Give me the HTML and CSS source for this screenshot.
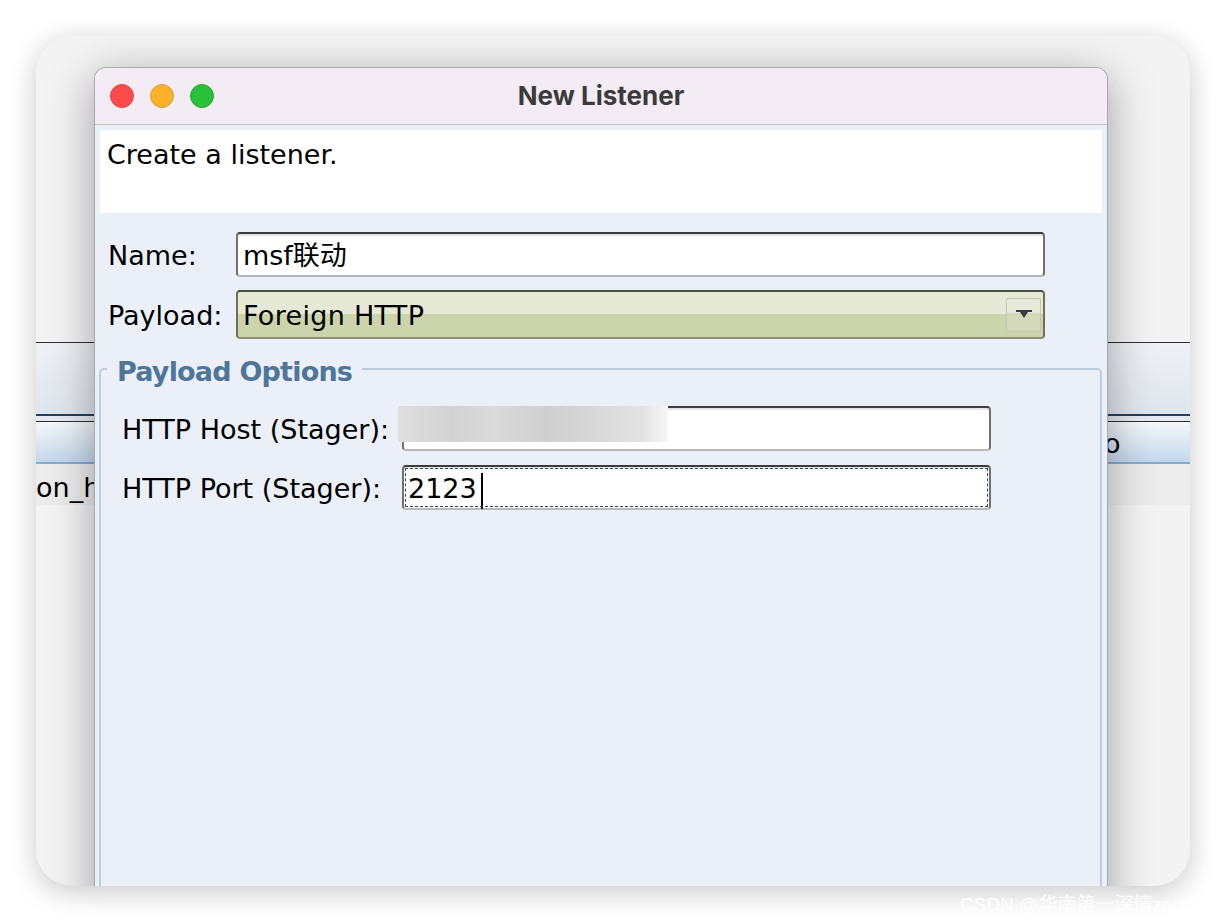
FILE: index.html
```html
<!DOCTYPE html>
<html lang="zh-CN">
    <head>
        <meta charset="utf-8">
        <meta name="viewport" content="width=device-width,initial-scale=1" />
        <title>New Listener</title>
        <link rel="stylesheet" href="styles.css">
    </head>
    <body>
        <div class="card">
            <div class="app">
                <div class="app-top"></div>
                <div class="toolbar"></div>
                <div class="toolbar-gap"></div>
                <div class="table-head"><span class="head-cell">o</span></div>
                <div class="table-row"><span class="row-cell">on_h</span></div>
            </div>

            <div class="dialog">
                <div class="titlebar">
                    <div class="lights">
                        <span class="light red"></span>
                        <span class="light yellow"></span>
                        <span class="light green"></span>
                    </div>
                    <div class="title">New Listener</div>
                </div>
                <div class="dialog-body">
                    <div class="desc">Create a listener.</div>
                    <div class="form">
                        <label class="label">Name:</label>
                        <div class="field">msf联动</div>
                        <label class="label">Payload:</label>
                        <div class="combo">
                            <span class="combo-text">Foreign HTTP</span>
                            <span class="combo-btn">
                                <svg width="16" height="9" viewBox="0 0 16 9">
                                    <path d="M0 0H16V2H12L8 8L4 2H0Z" fill="#3a3a3a"/>
                                </svg>
                            </span>
                        </div>
                    </div>
                    <fieldset class="options">
                        <legend class="legend">Payload Options</legend>
                        <div class="opt-grid">
                            <label class="label">HTTP Host (Stager):</label>
                            <div class="field host"><div class="blur"></div></div>
                            <label class="label">HTTP Port (Stager):</label>
                            <div class="field focus">2123<span class="caret"></span></div>
                        </div>
                    </fieldset>
                </div>
            </div>
        </div>
        <div class="watermark">CSDN @华南第一深情zangcc</div>
    </body>
</html>
```

FILE: styles.css
```css
html, body{
    margin: 0;
    height: 100%;
}
body{
    background: #fff;
    overflow: hidden;
    position: relative;
    font-family: "DejaVu Sans", "Noto Sans CJK SC", sans-serif;
    font-size: 27px;
    color: #000;
}

/* outer screenshot frame */
.card{
    margin: 36px 0 0 36px;
    width: 1154px;
    height: 850px;
    border-radius: 36px;
    background: #f3f3f3;
    box-shadow: 0 6px 28px rgba(0, 0, 0, 0.22);
    position: relative;
    overflow: hidden;
}

/* app window behind the dialog */
.app-top{
    height: 306px;
    border-bottom: 1px solid #2e2e2e;
}
.toolbar{
    height: 71px;
    background: linear-gradient(#eef0f4, #e0e5ed);
    border-bottom: 2px solid #22405f;
}
.toolbar-gap{
    height: 5px;
    background: #e7ebf1;
}
.table-head{
    height: 40px;
    border-top: 1px solid #2e2e2e;
    border-bottom: 2px solid #86abd0;
    background: linear-gradient(#f5f7fa, #c4d7eb);
    display: flex;
    justify-content: flex-end;
    line-height: 40px;
}
.head-cell{
    width: 86px;
    padding-top: 2px;
}
.table-row{
    height: 41px;
    background: #ececec;
    line-height: 41px;
}
.row-cell{
    display: block;
    padding-top: 3px;
}

/* dialog window */
.dialog{
    position: absolute;
    left: 58px;
    top: 31px;
    width: 1014px;
    height: 900px;
    box-sizing: border-box;
    border: 1px solid #a9a9a9;
    border-bottom: none;
    border-radius: 12px 12px 0 0;
    background: #ebf0f8;
    box-shadow: 0 10px 45px rgba(0, 0, 0, 0.35);
    overflow: hidden;
}
.titlebar{
    height: 56px;
    background: #f3ecf5;
    border-bottom: 1px solid #c3c3c3;
    position: relative;
}
.lights{
    position: absolute;
    left: 15px;
    top: 16px;
    display: flex;
    gap: 16px;
}
.light{
    width: 22px;
    height: 22px;
    border-radius: 50%;
    border: 1px solid;
}
.red{
    background: #fd4b4b;
    border-color: #e0443e;
}
.yellow{
    background: #fdb12b;
    border-color: #de9f2a;
}
.green{
    background: #2ac13a;
    border-color: #22a82f;
}
.title{
    text-align: center;
    font-family: Inter, "Liberation Sans", sans-serif;
    font-weight: 700;
    font-size: 26px;
    line-height: 56px;
    color: #3b3b3b;
}

.dialog-body{
    padding: 5px 5px 0 5px;
}
.desc{
    background: #fff;
    height: 76px;
    padding: 7px 7px 0 7px;
    line-height: 36px;
}

.form{
    display: grid;
    grid-template-columns: 136px 809px;
    row-gap: 13px;
    margin-top: 19px;
    align-items: center;
}
.label{
    padding-left: 8px;
    padding-top: 2px;
    white-space: nowrap;
}

.field{
    height: 45px;
    box-sizing: border-box;
    background: #fff;
    border: 2px solid;
    border-color: #3c3c3c #707070 #b8b8b8 #707070;
    border-radius: 4px;
    box-shadow: inset 0 2px 0 #e6e6e6;
    padding: 1px 5px 0 5px;
    line-height: 41px;
    position: relative;
}

.combo{
    height: 49px;
    box-sizing: border-box;
    border: 2px solid;
    border-color: #4b4f3d #6b7058 #8a8f75 #6b7058;
    border-radius: 4px;
    background: linear-gradient(#e5e9d5 0, #e5e9d5 50%, #ccd4ac 50%, #ccd4ac 100%);
    display: flex;
    align-items: center;
    justify-content: space-between;
    padding: 0 2px 0 5px;
}
.combo-text{
    letter-spacing: 0.3px;
    padding-top: 2px;
}
.combo-btn{
    width: 35px;
    height: 34px;
    box-sizing: border-box;
    border: 1px solid #c3c7ae;
    border-radius: 2px;
    background: linear-gradient(#e7e9da 0, #e7e9da 45%, #d5d9bc 45%, #d5d9bc 100%);
    display: flex;
    align-items: center;
    justify-content: center;
}

.options{
    margin: 15px 0 0 -1px;
    border: 2px solid #bccde2;
    border-radius: 5px;
    padding: 22px 0 40px 19px;
    min-height: 600px;
}
.legend{
    margin-left: -13px;
    padding: 6px 10px 0 10px;
    line-height: 24px;
    font-weight: 700;
    color: #4f7598;
    letter-spacing: -0.8px;
}
.opt-grid{
    display: grid;
    grid-template-columns: 282px 589px;
    row-gap: 14px;
    align-items: center;
}
.opt-grid .label{
    padding-left: 2px;
}

.host .blur{
    position: absolute;
    left: -6px;
    top: -2px;
    width: 270px;
    height: 36px;
    background: linear-gradient(90deg, #dedede 0, #d2d2d2 20%, #dadada 35%, #cfcfcf 55%, #d6d6d6 70%, #e2e2e2 90%, #f6f6f6 100%);
}

.focus{
    outline: 1px dashed #2d4a6b;
    outline-offset: -4px;
    padding-left: 4px;
}
.caret{
    display: inline-block;
    width: 2px;
    height: 36px;
    background: #000;
    margin-left: 4px;
    vertical-align: middle;
}

.watermark{
    position: absolute;
    left: 960px;
    top: 889px;
    font-family: "Liberation Sans", "Noto Sans CJK SC", sans-serif;
    font-size: 19px;
    color: rgba(255, 255, 255, 0.92);
    white-space: nowrap;
}
```
